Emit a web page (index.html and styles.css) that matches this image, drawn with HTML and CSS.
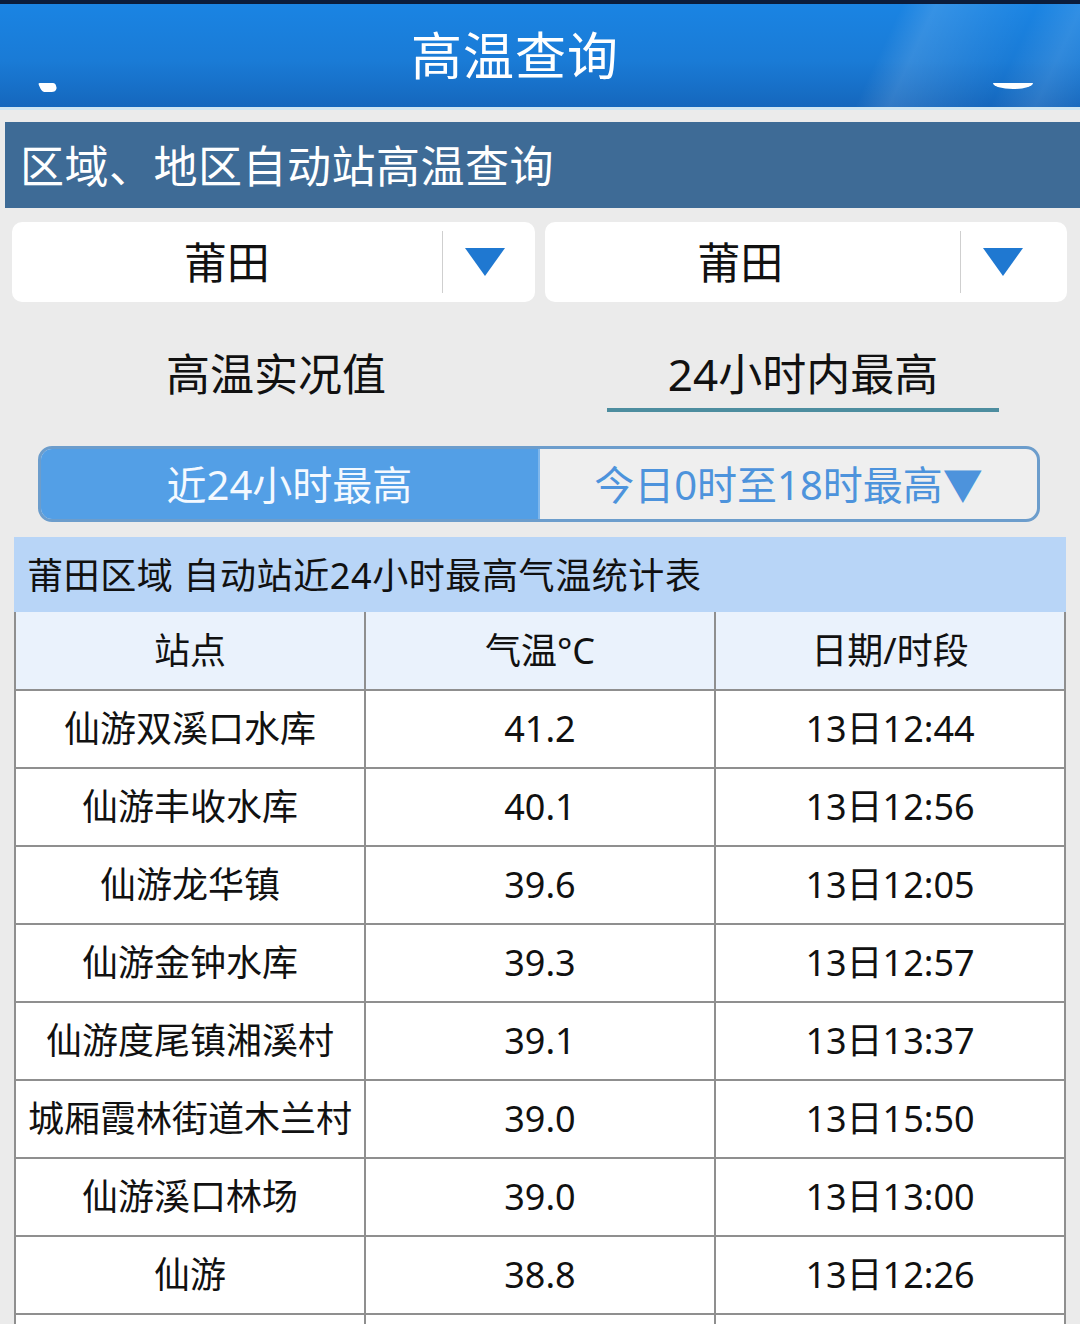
FILE: index.html
```html
<!DOCTYPE html>
<html lang="zh-CN">
<head>
<meta charset="utf-8">
<title>高温查询</title>
<link rel="stylesheet" href="styles.css">
</head>
<body>
<div class="page">
  <header class="appbar">
    <span class="bar-icon left"></span>
    <h1 class="appbar-title">高温查询</h1>
    <span class="bar-icon right"></span>
  </header>
  <div class="section-bar">区域、地区自动站高温查询</div>
  <div class="selects">
    <div class="select first">
      <span class="select-text">莆田</span>
      <span class="select-arrow"><svg width="40" height="28" viewBox="0 0 40 28"><polygon points="0,0 40,0 20,28" fill="#1f78d1"/></svg></span>
    </div>
    <div class="select second">
      <span class="select-text">莆田</span>
      <span class="select-arrow"><svg width="40" height="28" viewBox="0 0 40 28"><polygon points="0,0 40,0 20,28" fill="#1f78d1"/></svg></span>
    </div>
  </div>
  <div class="tabs">
    <div class="tab">高温实况值</div>
    <div class="tab active">24小时内最高</div>
  </div>
  <div class="segment">
    <div class="seg on">近24小时最高</div>
    <div class="seg off">今日0时至18时最高▼</div>
  </div>
  <div class="caption">莆田区域 自动站近24小时最高气温统计表</div>
  <table class="data">
    <thead>
      <tr><th>站点</th><th>气温°C</th><th>日期/时段</th></tr>
    </thead>
    <tbody>
      <tr><td>仙游双溪口水库</td><td>41.2</td><td>13日12:44</td></tr>
      <tr><td>仙游丰收水库</td><td>40.1</td><td>13日12:56</td></tr>
      <tr><td>仙游龙华镇</td><td>39.6</td><td>13日12:05</td></tr>
      <tr><td>仙游金钟水库</td><td>39.3</td><td>13日12:57</td></tr>
      <tr><td>仙游度尾镇湘溪村</td><td>39.1</td><td>13日13:37</td></tr>
      <tr><td>城厢霞林街道木兰村</td><td>39.0</td><td>13日15:50</td></tr>
      <tr><td>仙游溪口林场</td><td>39.0</td><td>13日13:00</td></tr>
      <tr><td>仙游</td><td>38.8</td><td>13日12:26</td></tr>
      <tr class="filler"><td></td><td></td><td></td></tr>
    </tbody>
  </table>
</div>
</body>
</html>
```

FILE: styles.css
```css
html, body {
  margin: 0;
  padding: 0;
}
body {
  background: #ebebeb;
  font-family: "Noto Sans", "Noto Sans CJK SC", sans-serif;
  color: #111;
  width: 1080px;
  height: 1324px;
  overflow: hidden;
}
.page {
  width: 1080px;
}
.appbar {
  position: relative;
  height: 103px;
  border-top: 4px solid #0b1d3c;
  border-bottom: 3px solid #cfe6f3;
  background:
    linear-gradient(115deg, rgba(255,255,255,0) 0%, rgba(255,255,255,0) 80%, rgba(255,255,255,0.12) 83%, rgba(255,255,255,0.05) 88%, rgba(255,255,255,0) 92%, rgba(255,255,255,0.1) 96%, rgba(255,255,255,0.02) 100%),
    linear-gradient(180deg, #1a84e3 0%, #1a7bd6 55%, #1567bd 100%);
  display: flex;
  align-items: center;
  justify-content: center;
}
.appbar-title {
  margin: 0;
  font-family: "Noto Sans CJK SC", sans-serif;
  font-weight: 400;
  font-size: 51px;
  line-height: 1;
  color: #ffffff;
  letter-spacing: 1px;
  padding-right: 50px;
  padding-bottom: 4px;
}
.bar-icon {
  position: absolute;
  background: #fff;
}
.bar-icon.left {
  left: 40px;
  top: 79px;
  width: 17px;
  height: 9px;
  border-radius: 2px 2px 8px 4px;
  transform: skewX(25deg);
}
.bar-icon.right {
  left: 993px;
  top: 79px;
  width: 40px;
  height: 6px;
  border-radius: 0 0 20px 20px / 0 0 6px 6px;
}
.section-bar {
  margin: 12px 0 0 5px;
  height: 86px;
  background: #3e6b96;
  color: #ffffff;
  font-family: "Noto Sans CJK SC", sans-serif;
  font-size: 44px;
  line-height: 84px;
  padding-left: 15px;
  letter-spacing: 0.5px;
}
.selects {
  display: flex;
  gap: 10px;
  padding: 14px 13px 0 12px;
}
.select {
  flex: 1;
  height: 80px;
  background: #ffffff;
  border-radius: 10px;
  display: flex;
  align-items: center;
}
.select-text {
  flex: 1;
  text-align: center;
  font-family: "Noto Sans CJK SC", sans-serif;
  font-size: 43px;
  color: #111;
  padding-bottom: 4px;
}
.select.second .select-text {
  padding-right: 24px;
}
.select-arrow {
  width: 70px;
  height: 62px;
  border-left: 1px solid #cfcfcf;
  display: flex;
  align-items: center;
  padding-left: 22px;
}
.select.second .select-arrow {
  width: 84px;
}
.tabs {
  display: flex;
  height: 144px;
  align-items: flex-start;
  padding-top: 42px;
  box-sizing: border-box;
}
.tab {
  flex: 1;
  text-align: center;
  font-size: 44px;
  line-height: 60px;
  color: #111;
}
.tab:first-child {
  padding-left: 12px;
}
.tab.active {
  flex: none;
  width: 392px;
  margin: 0 81px 0 67px;
  border-bottom: 4px solid #4d8d9f;
  padding-bottom: 4px;
}
.segment {
  display: flex;
  margin: 0 40px 0 38px;
  height: 76px;
  box-sizing: border-box;
  border: 3px solid #6c9dcc;
  border-radius: 14px;
  overflow: hidden;
  background: #efefef;
}
.seg {
  display: flex;
  align-items: center;
  justify-content: center;
  font-size: 40px;
  padding-bottom: 2px;
  box-sizing: border-box;
}
.seg.on {
  width: 499px;
  background: #539fe6;
  color: #f4f9ff;
  border-right: 2px solid #7fb7ec;
}
.seg.off {
  flex: 1;
  color: #4d93dc;
}
.caption {
  margin: 15px 14px 0 14px;
  height: 75px;
  background: #b8d5f7;
  font-size: 36px;
  line-height: 78px;
  padding-left: 13px;
  color: #111;
  letter-spacing: 0.6px;
}
.data {
  margin: 0 14px;
  width: 1052px;
  border-collapse: collapse;
  table-layout: fixed;
  background: #ffffff;
}
.data th, .data td {
  padding: 0;
  border: 2px solid #8f8f8f;
  text-align: center;
  font-weight: 400;
  font-size: 36px;
  color: #111;
  line-height: 1;
}
.data thead tr {
  background: #eaf2fc;
}
.data th {
  height: 77px;
  border-top: none;
}
.data td {
  height: 76px;
}
.data .filler td {
  height: 40px;
}
```
